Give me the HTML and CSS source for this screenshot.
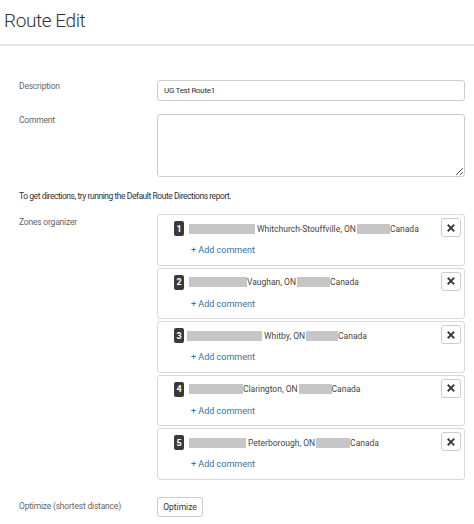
FILE: index.html
```html
<!DOCTYPE html>
<html lang="en">
<head>
<meta charset="utf-8">
<title>Route Edit</title>
<link rel="stylesheet" href="styles.css">
</head>
<body>
<header class="header">
  <h1 class="title">Route Edit</h1>
</header>
<main class="form">
  <div class="row row-desc">
    <label class="label">Description</label>
    <input class="input" type="text" value="UG Test Route1">
  </div>
  <div class="row row-comment">
    <label class="label">Comment</label>
    <textarea class="textarea"></textarea>
  </div>
  <p class="info">To get directions, try running the Default Route Directions report.</p>
  <div class="row row-zones">
    <label class="label">Zones organizer</label>
    <div class="zones">
      <div class="card">
        <div class="card-main">
          <div class="line">
            <span class="badge">1</span>
            <span class="redact" style="width:66px"></span>
            <span class="place gap-l2">Whitchurch-Stouffville, ON</span>
            <span class="redact" style="width:33px"></span>
            <span class="place">Canada</span>
          </div>
          <a class="add" href="#">+ Add comment</a>
        </div>
        <button class="remove" type="button" aria-label="Remove"><svg viewBox="0 0 10 10" width="8" height="8"><path d="M1.8 1.8 L8.2 8.2 M8.2 1.8 L1.8 8.2" stroke="#3a3a3a" stroke-width="2.4" stroke-linecap="square"/></svg></button>
      </div>
      <div class="card">
        <div class="card-main">
          <div class="line">
            <span class="badge">2</span>
            <span class="redact" style="width:58px"></span>
            <span class="place">Vaughan, ON</span>
            <span class="redact" style="width:33px"></span>
            <span class="place">Canada</span>
          </div>
          <a class="add" href="#">+ Add comment</a>
        </div>
        <button class="remove" type="button" aria-label="Remove"><svg viewBox="0 0 10 10" width="8" height="8"><path d="M1.8 1.8 L8.2 8.2 M8.2 1.8 L1.8 8.2" stroke="#3a3a3a" stroke-width="2.4" stroke-linecap="square"/></svg></button>
      </div>
      <div class="card">
        <div class="card-main">
          <div class="line">
            <span class="badge">3</span>
            <span class="redact redact-wide" style="width:75px"></span>
            <span class="place gap-l2">Whitby, ON</span>
            <span class="redact" style="width:32px"></span>
            <span class="place">Canada</span>
          </div>
          <a class="add" href="#">+ Add comment</a>
        </div>
        <button class="remove" type="button" aria-label="Remove"><svg viewBox="0 0 10 10" width="8" height="8"><path d="M1.8 1.8 L8.2 8.2 M8.2 1.8 L1.8 8.2" stroke="#3a3a3a" stroke-width="2.4" stroke-linecap="square"/></svg></button>
      </div>
      <div class="card">
        <div class="card-main">
          <div class="line">
            <span class="badge">4</span>
            <span class="redact" style="width:54px"></span>
            <span class="place">Clarington, ON</span>
            <span class="redact" style="width:33px"></span>
            <span class="place">Canada</span>
          </div>
          <a class="add" href="#">+ Add comment</a>
        </div>
        <button class="remove" type="button" aria-label="Remove"><svg viewBox="0 0 10 10" width="8" height="8"><path d="M1.8 1.8 L8.2 8.2 M8.2 1.8 L1.8 8.2" stroke="#3a3a3a" stroke-width="2.4" stroke-linecap="square"/></svg></button>
      </div>
      <div class="card">
        <div class="card-main">
          <div class="line">
            <span class="badge">5</span>
            <span class="redact" style="width:57px"></span>
            <span class="place gap-l2">Peterborough, ON</span>
            <span class="redact" style="width:34px"></span>
            <span class="place">Canada</span>
          </div>
          <a class="add" href="#">+ Add comment</a>
        </div>
        <button class="remove" type="button" aria-label="Remove"><svg viewBox="0 0 10 10" width="8" height="8"><path d="M1.8 1.8 L8.2 8.2 M8.2 1.8 L1.8 8.2" stroke="#3a3a3a" stroke-width="2.4" stroke-linecap="square"/></svg></button>
      </div>
    </div>
  </div>
  <div class="row row-opt">
    <label class="label">Optimize (shortest distance)</label>
    <div><button class="btn" type="button">Optimize</button></div>
  </div>
</main>
</body>
</html>
```

FILE: styles.css
```css
* { box-sizing: border-box; }

body {
  margin: 0;
  font-family: Roboto, "Noto Sans", sans-serif;
  color: #333;
  background: #fff;
}

.header {
  height: 46px;
  border-bottom: 2px solid #e3e3e3;
  padding: 9px 0 0 4px;
}

.title {
  margin: 0;
  font-size: 19px;
  font-weight: 300;
  letter-spacing: -0.4px;
  line-height: normal;
  color: #333;
}

.form {
  padding: 34px 9px 0 19px;
}

.row {
  display: grid;
  grid-template-columns: 138px 1fr;
  align-items: start;
}

.label {
  font-size: 8.5px;
  letter-spacing: -0.2px;
  line-height: 12px;
  color: #666;
}

.row-desc { margin-bottom: 13px; }

.input {
  display: block;
  width: 100%;
  height: 21px;
  border: 1px solid #ccc;
  border-radius: 3px;
  padding: 0 6px;
  font-family: Roboto, sans-serif;
  font-size: 8px;
  letter-spacing: -0.3px;
  color: #333;
  background: #fff;
  outline: none;
}

.textarea {
  display: block;
  width: 100%;
  height: 63px;
  border: 1px solid #ccc;
  border-radius: 3px;
  padding: 4px 6px;
  font-family: Roboto, sans-serif;
  font-size: 8px;
  background: #fff;
  outline: none;
}

.info {
  margin: 13px 0 12px;
  font-size: 8.5px;
  letter-spacing: -0.45px;
  line-height: 12px;
  color: #333;
}

.row-zones .label { padding-top: 2px; }

.zones {
  display: flex;
  flex-direction: column;
  gap: 2px;
}

.card {
  height: 51.5px;
  border: 1px solid #d9d9d9;
  border-radius: 3px;
  padding: 0 3px 0 16px;
  display: flex;
  align-items: flex-start;
  background: #fff;
}

.card-main {
  flex: 1;
  min-width: 0;
}

.line {
  margin-top: 6px;
  height: 15px;
  display: flex;
  align-items: center;
  white-space: nowrap;
}

.badge {
  width: 10px;
  height: 15px;
  border-radius: 2px;
  background: #3a3a3a;
  color: #fff;
  font-size: 9px;
  font-weight: 700;
  display: flex;
  align-items: center;
  justify-content: center;
  margin-right: 5px;
  flex: none;
}

.redact {
  display: inline-block;
  height: 10px;
  background: #c6c6c6;
  flex: none;
}

.redact-wide { margin-left: -2px; }

.place {
  font-size: 8.5px;
  color: #444;
  margin-right: 1px;
}

.gap-l2 { margin-left: 2px; }

.add {
  display: block;
  margin: 8px 0 0 17px;
  font-size: 9px;
  line-height: 12px;
  color: #3571ac;
  text-decoration: none;
}

.remove {
  margin-top: 3px;
  width: 20px;
  height: 19px;
  border: 1px solid #ccc;
  border-radius: 3px;
  background: #fff;
  padding: 0;
  display: flex;
  align-items: center;
  justify-content: center;
  flex: none;
}

.remove svg { display: block; }

.row-opt {
  margin-top: 15.5px;
  align-items: center;
}

.btn {
  width: 46px;
  height: 20px;
  border: 1px solid #ccc;
  border-radius: 3px;
  background: #fff;
  font-family: Roboto, sans-serif;
  font-size: 8.5px;
  color: #333;
  padding: 0;
}
```
